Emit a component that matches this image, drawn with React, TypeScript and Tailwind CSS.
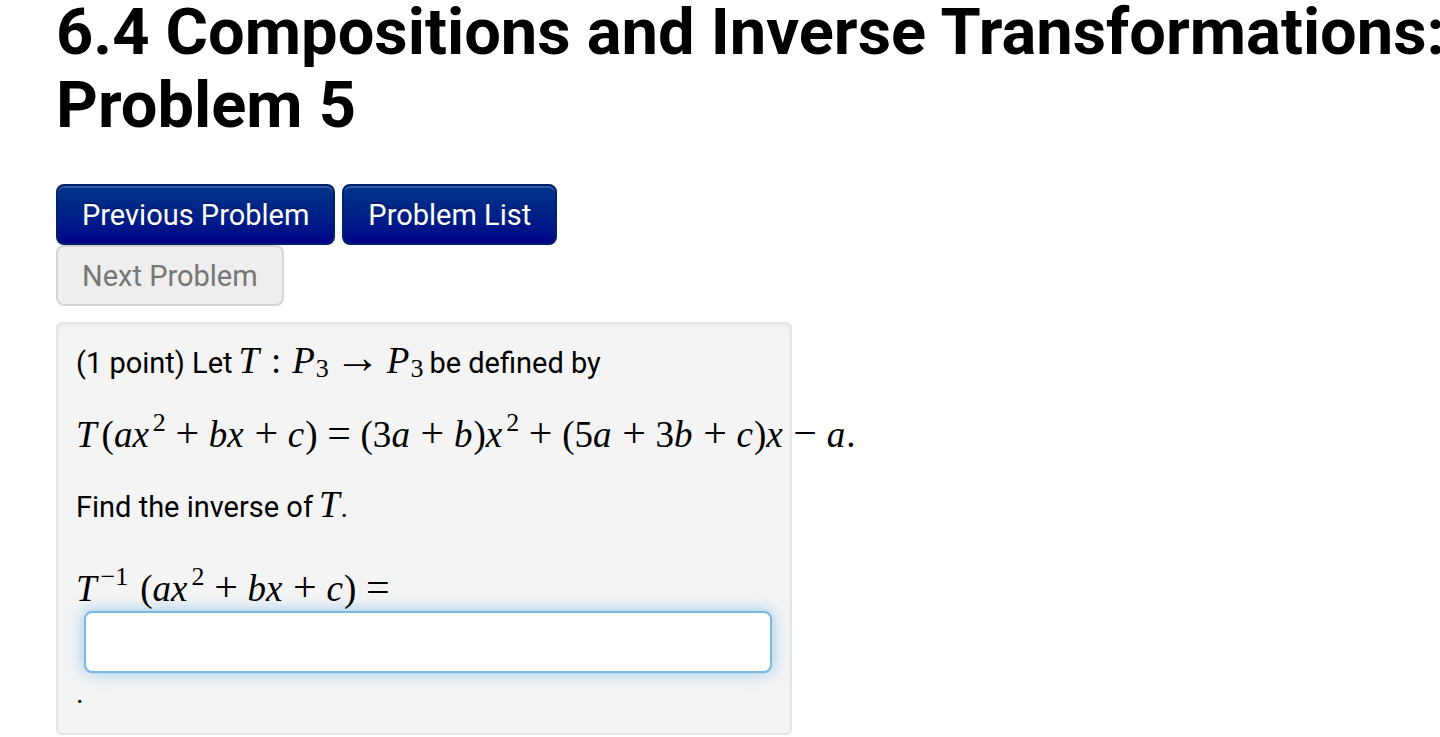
import type { ReactNode } from "react";

interface ChildrenProps {
    children: ReactNode;
}

const navButton =
    "h-[61px] rounded-lg border-2 px-6 text-[29px] leading-10 whitespace-nowrap";

const primaryButton =
    "border-[#00206b] bg-gradient-to-b from-[#003388] to-[#000088] text-white shadow-[inset_0_2px_0_rgba(255,255,255,0.2)] [text-shadow:0_-2px_0_rgba(0,0,0,0.25)]";

function MathText({ children }: ChildrenProps) {
    return (
        <span className="inline-flex items-baseline font-['Liberation_Serif',serif] text-[37px] leading-10 whitespace-nowrap">
            {children}
        </span>
    );
}

function Var({ children }: ChildrenProps) {
    return <i className="pr-px">{children}</i>;
}

function Op({ children }: ChildrenProps) {
    return <span className="w-[43px] text-center text-[42px] leading-10">{children}</span>;
}

function Sup({ children }: ChildrenProps) {
    return <sup className="top-0 -translate-y-4 self-baseline pl-[3px] text-[26px] leading-none">{children}</sup>;
}

function Sub({ children }: ChildrenProps) {
    return <sub className="bottom-0 translate-y-1 self-baseline text-[26px] leading-none">{children}</sub>;
}

// ax² + bx + c, shared by both sides of the problem
function Quadratic() {
    return (
        <>
            <span className="pl-1">(</span>
            <Var>ax</Var>
            <Sup>2</Sup>
            <Op>+</Op>
            <Var>bx</Var>
            <Op>+</Op>
            <Var>c</Var>
            <span>)</span>
        </>
    );
}

export default function App() {
    return (
        <main className="min-h-screen bg-white pl-14 font-[Roboto,sans-serif] text-[29px] leading-10 text-black">
            <h1 className="-mt-1 -mr-3 text-[65px] leading-[73px] font-bold">
                6.4 Compositions and Inverse Transformations: Problem 5
            </h1>

            <nav className="mt-[42px] flex flex-col items-start">
                <div className="flex gap-[7px]">
                    <button type="button" className={`${navButton} ${primaryButton}`}>Previous Problem</button>
                    <button type="button" className={`${navButton} ${primaryButton}`}>Problem List</button>
                </div>
                <button type="button" disabled className={`${navButton} border-[#d4d4d4] bg-[#eeeeee] text-[#777777]`}>
                    Next Problem
                </button>
            </nav>

            <section className="mt-4 max-w-[736px] rounded-md border-2 border-[#e4e4e4] bg-[#f4f4f4] px-[18px] pt-3.5 pb-5 shadow-[inset_0_2px_2px_rgba(0,0,0,0.05)]">
                <p className="flex items-baseline gap-1.5 whitespace-nowrap">
                    <span>(1 point) Let</span>
                    <MathText>
                        <Var>T</Var>
                        <span className="w-8 text-center">:</span>
                        <Var>P</Var>
                        <Sub>3</Sub>
                        <span className="flex w-[58px] justify-center text-[46px] leading-10">→</span>
                        <Var>P</Var>
                        <Sub>3</Sub>
                    </MathText>
                    <span>be defined by</span>
                </p>

                <p className="mt-[30px] flex">
                    <MathText>
                        <Var>T</Var>
                        <Quadratic />
                        <Op>=</Op>
                        <span>(3</span>
                        <Var>a</Var>
                        <Op>+</Op>
                        <Var>b</Var>
                        <span>)</span>
                        <Var>x</Var>
                        <Sup>2</Sup>
                        <Op>+</Op>
                        <span>(5</span>
                        <Var>a</Var>
                        <Op>+</Op>
                        <span>3</span>
                        <Var>b</Var>
                        <Op>+</Op>
                        <Var>c</Var>
                        <span>)</span>
                        <Var>x</Var>
                        <Op>−</Op>
                        <Var>a</Var>
                        <span>.</span>
                    </MathText>
                </p>

                <p className="mt-[30px] flex items-baseline gap-1.5">
                    <span>Find the inverse of</span>
                    <span>
                        <MathText><Var>T</Var></MathText>.
                    </span>
                </p>

                <label htmlFor="answer" className="mt-10 flex">
                    <MathText>
                        <Var>T</Var>
                        <Sup>−1</Sup>
                        <span className="pl-2" />
                        <Quadratic />
                        <Op>=</Op>
                    </MathText>
                </label>
                <div className="pt-0.5 pl-2">
                    <input
                        id="answer"
                        type="text"
                        className="block h-[62px] w-full rounded-lg border-2 border-[#7cb8e0] bg-white px-3 shadow-[0_0_16px_rgba(82,168,236,0.6)] outline-none"
                    />
                </div>
                <p>.</p>
            </section>
        </main>
    );
}
